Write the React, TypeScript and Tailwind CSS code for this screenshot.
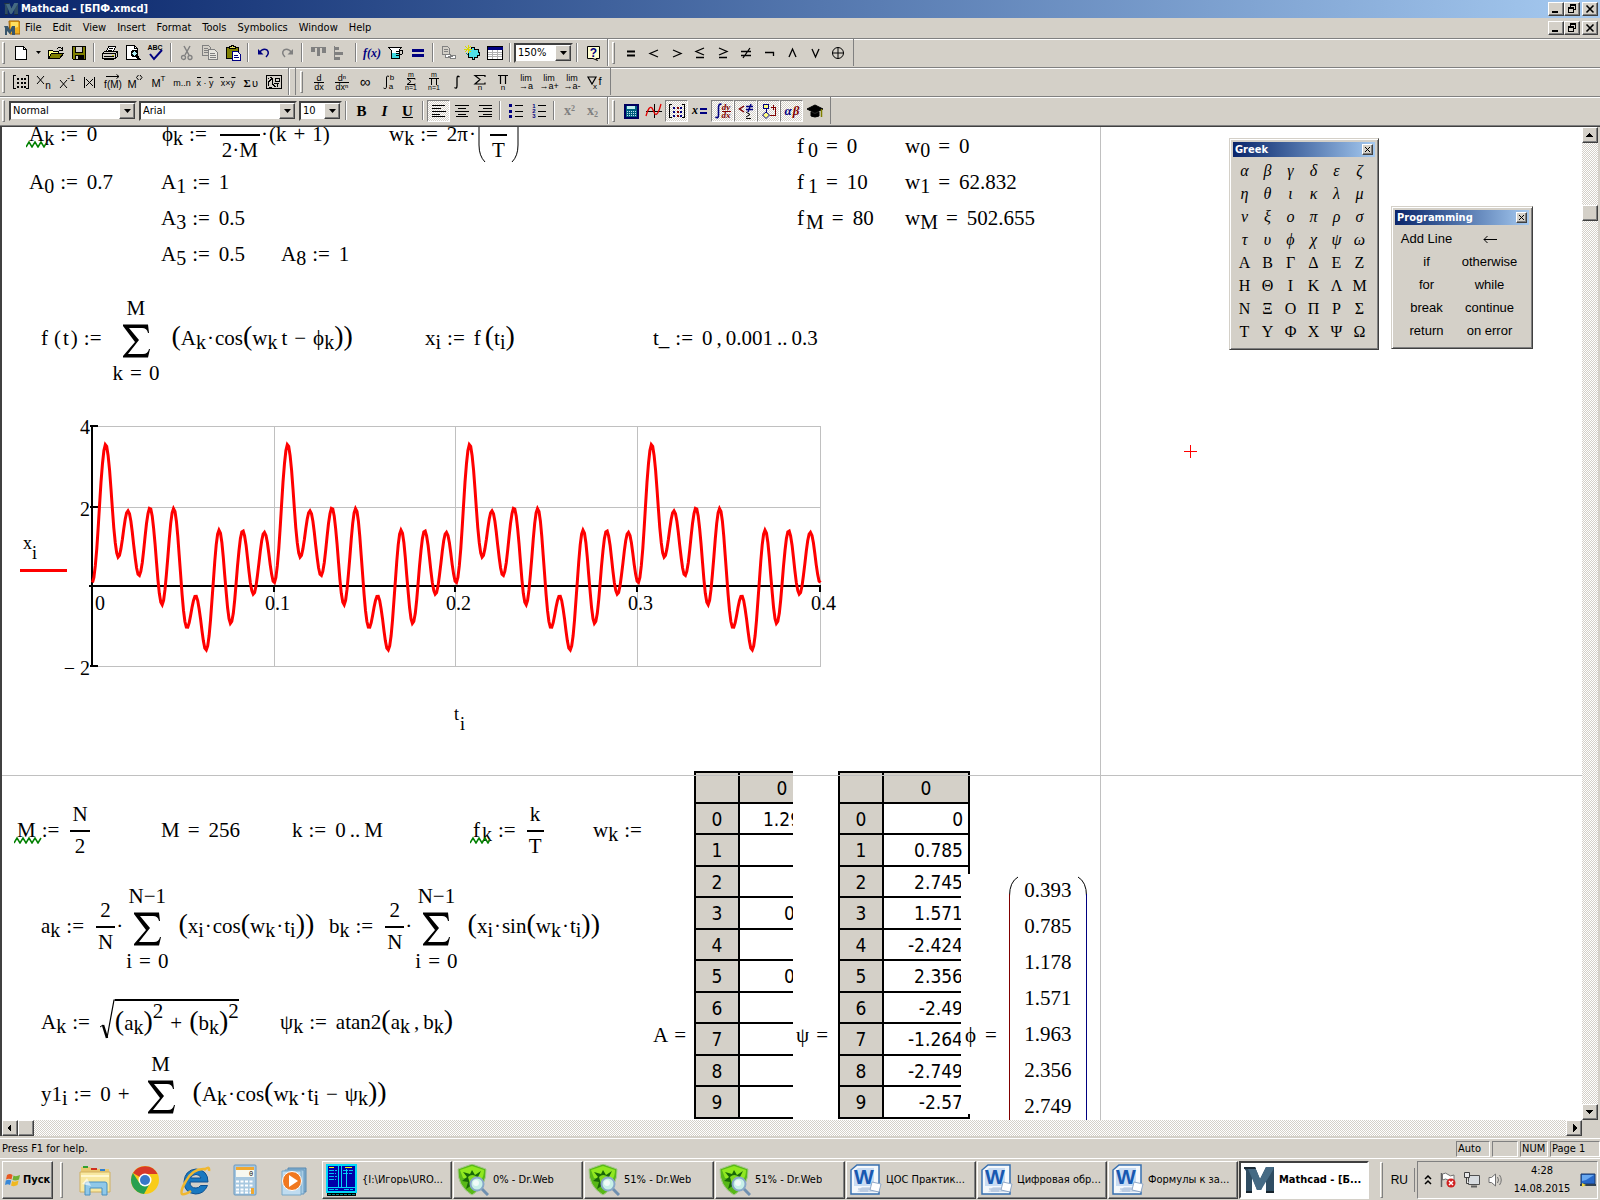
import React from "react";

type Kids = { children?: React.ReactNode };

const RAISED =
  "border border-t-white border-l-white border-r-[#404040] border-b-[#404040] shadow-[inset_-1px_-1px_0_#808080] bg-[#d4d0c8]";
const DITHER = "bg-[repeating-conic-gradient(#ffffff_0_25%,#d4d0c8_0_50%)] bg-[length:2px_2px]";

/* ---------- small drawing helpers ---------- */

function Ic({ children, soft }: Kids & { soft?: boolean }) {
  return (
    <svg
      viewBox="0 0 16 16"
      className="size-4 shrink-0 overflow-visible"
      fill="none"
      stroke="#000"
      strokeWidth="1"
      shapeRendering={soft ? "auto" : "crispEdges"}
      aria-hidden="true"
    >
      {children}
    </svg>
  );
}

function T({
  x,
  y,
  s,
  children,
  fill = "#000",
  serif,
  italic,
  bold,
}: Kids & { x: number; y: number; s: number; fill?: string; serif?: boolean; italic?: boolean; bold?: boolean }) {
  return (
    <text
      x={x}
      y={y}
      fontSize={s}
      fill={fill}
      stroke="none"
      textAnchor="middle"
      fontStyle={italic ? "italic" : "normal"}
      fontWeight={bold ? 700 : 400}
      fontFamily={serif ? "Liberation Serif, serif" : "Liberation Sans, sans-serif"}
    >
      {children}
    </text>
  );
}

function MLogo({ className }: { className: string }) {
  return (
    <svg viewBox="0 0 32 30" className={className} aria-hidden="true">
      <path d="M1 2H12L17 14L23 2H31V4H31V28H23V13L18 25H14L9 12V28H3V6L1 3Z" fill="#2f4d63" />
      <path d="M12 2L17 14L23 2H31L30 5L18 25H14L5 4H11Z" fill="#456a84" />
      <path d="M1 2H12L13 4H1Z" fill="#1c2c38" />
      <path d="M3 26H9V28H3ZM23 26H31V28H23Z" fill="#16232d" />
    </svg>
  );
}

/* ---------- toolbar icons ---------- */

const K = "#000";
const G = "#808080";
const N = "#000080";
const O = "#808000";

const icons: Record<string, React.ReactNode> = {
  new: (
    <Ic>
      <path d="M2.5 1.5H10.5L13.5 4.5V14.5H2.5Z" fill="#fff" />
      <path d="M10.5 1.5V4.5H13.5" />
    </Ic>
  ),
  open: (
    <Ic>
      <path d="M.5 13.5V5.5H4.5L5.5 6.5H10.5V8.5" fill="#ffff80" />
      <path d="M.5 13.5L3.5 8.5H15.5L11.5 13.5Z" fill={O} />
      <path d="M9 3.5L10.5 2.5H12.5L14.5 4.5M14.5 2V5.5H11" />
    </Ic>
  ),
  save: (
    <Ic>
      <path d="M1.5 1.5H14.5V14.5H2.5L1.5 13.5Z" fill={O} />
      <path d="M4.5 1.5H11.5V7.5H4.5Z" fill="#d4d0c8" />
      <path d="M4 10H12V14H4Z" fill={K} />
      <path d="M5 11H7V14H5Z" fill="#d4d0c8" stroke="none" />
    </Ic>
  ),
  print: (
    <Ic>
      <path d="M4.5 6.5L6.5 1.5H13.5L11.5 6.5" fill="#fff" />
      <path d="M7 3.5H11M6 5.5H10" />
      <path d="M.5 8.5L2.5 6.5H15.5V11.5L13.5 13.5H.5Z" fill="#d4d0c8" />
      <path d="M.5 8.5H13.5V13M13.5 8.5L15.5 6.5M2 11.5H12M2.5 13.5V14.5H11.5L13 13" />
      <path d="M10 10.5H12" stroke="#c0c000" />
    </Ic>
  ),
  preview: (
    <Ic>
      <path d="M1.5 .5H9.5L12.5 3.5V14.5H1.5Z" fill="#fff" />
      <path d="M9.5 .5V3.5H12.5" />
      <circle cx="9.5" cy="8.5" r="3" fill="#b0f0f8" strokeWidth="1.5" />
      <path d="M11.5 11L15 15" strokeWidth="2.5" />
    </Ic>
  ),
  spell: (
    <Ic soft>
      <T x={7} y={5} s={7} bold>
        ABC
      </T>
      <path d="M2 9L6 14L14 5" stroke={N} strokeWidth="2" />
    </Ic>
  ),
  cut: (
    <Ic soft>
      <path d="M5 1L10 10M11 1L6 10" stroke={G} strokeWidth="1.5" />
      <circle cx="4.5" cy="12.5" r="2" stroke={G} strokeWidth="1.3" />
      <circle cx="11" cy="12.5" r="2" stroke={G} strokeWidth="1.3" />
    </Ic>
  ),
  copy: (
    <Ic>
      <path d="M.5 .5H6.5L8.5 2.5V10.5H.5ZM2 3.5H6M2 5.5H7M2 7.5H7" stroke={G} />
      <path d="M6.5 4.5H12.5L15.5 7.5V14.5H6.5Z" stroke={G} fill="#e8e6e0" />
      <path d="M8 8.5H13M8 10.5H14M8 12.5H14" stroke={G} />
    </Ic>
  ),
  paste: (
    <Ic>
      <path d="M1.5 2.5H13.5V13.5H1.5Z" fill={O} />
      <path d="M4.5 3.5V1.5H6.5V.5H8.5V1.5H10.5V3.5Z" fill="#e0e060" />
      <path d="M7.5 6.5H12.5L15.5 9.5V15.5H7.5Z" fill="#fff" stroke={N} />
      <path d="M9 10.5H13M9 12.5H14" stroke={N} />
    </Ic>
  ),
  undo: (
    <Ic soft>
      <path d="M3 8Q7 2.500 11 5Q14 8 10 12" stroke={N} strokeWidth="1.5" />
      <path d="M2 4V9.500H7.500Z" fill={N} stroke="none" />
    </Ic>
  ),
  redo: (
    <Ic soft>
      <path d="M13 8Q9 2.500 5 5Q2 8 6 12" stroke={G} strokeWidth="1.5" />
      <path d="M14 4V9.500H8.500Z" fill={G} stroke="none" />
    </Ic>
  ),
  alignTop: (
    <Ic>
      <path d="M1 2H16V3H1ZM1 3H5V7H1ZM7 3H10V11H7ZM12 3H16V8H12Z" fill={G} stroke="none" />
    </Ic>
  ),
  alignMid: (
    <Ic>
      <path d="M1 1H2V15H1ZM2 2H6V5H2ZM2 7H10V10H2ZM2 12H7V15H2Z" fill={G} stroke="none" />
    </Ic>
  ),
  fx: (
    <Ic soft>
      <T x={8} y={12} s={12} fill={N} serif italic bold>
        f(x)
      </T>
    </Ic>
  ),
  cup: (
    <Ic>
      <path d="M1.500 2.500H14.500L12.500 4.500V13.500H4.500V5.500Z" fill="#fff" />
      <path d="M5 8H12V13H5Z" fill="#40d8e0" stroke="none" />
      <path d="M12.500 5.500H15.500V8.500L12.500 10.500M9 6.500H12M9 8.500H12M9 10.500H12" />
    </Ic>
  ),
  eqBig: (
    <Ic>
      <path d="M2 4H14V7H2ZM2 9H14V12H2Z" fill={N} stroke="none" />
    </Ic>
  ),
  link: (
    <Ic>
      <path d="M1.500 1.500H6.500L8.500 3.500V9.500H1.500ZM3 4.500H7M3 6.500H7" stroke={G} />
      <path d="M4.500 9.500H9.500V12.500H4.500ZM9.500 10.500H14.500V13.500H9.500ZM7 11.500H12" stroke={G} fill="#fff" />
    </Ic>
  ),
  puzzle: (
    <Ic>
      <path d="M4.500 4.500H7.500V2.500H10.500V4.500H14.500V7.500H15.500V10.500H13.500V12.500H10.500V14.500H8.500V12.500H4.500Z" fill="#50e0e8" />
      <path d="M1 1L7 7M7 1L1 7M4 0V8M0 4H8" stroke="#d8d800" />
      <path d="M2.500 8.500L4.500 10.500" stroke="#008080" />
    </Ic>
  ),
  table: (
    <Ic>
      <path d="M.5 1.500H15.500V14.500H.5Z" fill="#fff" />
      <path d="M1 2H15V4H1Z" fill={N} stroke={N} />
      <path d="M1 7.500H15M1 9.500H15M1 11.500H15M5.500 5V14M10.500 5V14" stroke="#b0b0b0" />
    </Ic>
  ),
  help: (
    <Ic soft>
      <path d="M2.500 1.500H14.500V13.500H11L12.500 15.500L8 13.500H2.500Z" fill="#ffffd0" />
      <T x={8.5} y={12} s={12} fill={N} bold>
        ?
      </T>
    </Ic>
  ),
  left: (
    <Ic>
      <path d="M1 2.500H14M1 5.500H10M1 8.500H15M1 11.500H9M1 13.500H14" />
    </Ic>
  ),
  center: (
    <Ic>
      <path d="M1 2.500H15M4 5.500H12M1 8.500H15M4 11.500H12M2 13.500H14" />
    </Ic>
  ),
  right: (
    <Ic>
      <path d="M2 2.500H15M6 5.500H15M1 8.500H15M6 11.500H15M2 13.500H15" />
    </Ic>
  ),
  bullets: (
    <Ic>
      <path d="M1 1H4V4H1ZM1 7H4V10H1ZM1 12H4V15H1Z" fill={N} stroke="none" />
      <path d="M7 2.500H15M7 8.500H15M7 13.500H15" />
    </Ic>
  ),
  numbers: (
    <Ic>
      <T x={3} y={5} s={6} fill={N} bold>
        1
      </T>
      <T x={3} y={10} s={6} fill={N} bold>
        2
      </T>
      <T x={3} y={15} s={6} fill={N} bold>
        3
      </T>
      <path d="M7 2.500H15M7 8.500H15M7 13.500H15" />
    </Ic>
  ),
  calc: (
    <Ic>
      <path d="M1.500 1.500H14.500V14.500H1.500Z" fill="#006080" stroke="#000060" strokeWidth="2" />
      <path d="M4 3H12V6H4Z" fill="#c0f0f0" stroke="none" />
      <path d="M4 8.500H13M4 10.500H13M4 12.500H13" stroke="#c0e0f0" strokeDasharray="1 1" />
    </Ic>
  ),
  graph: (
    <Ic soft>
      <path d="M0 8.500H16M8.500 1V15" />
      <path d="M0 13Q3 2 6 5Q8 9 9 11Q12 13 15 1" stroke="#e00000" strokeWidth="1.3" />
    </Ic>
  ),
  matrix: (
    <Ic>
      <path d="M3 1.500H.5V14.500H3M13 1.500H15.500V14.500H13" />
      <path d="M4 4H6V6H4ZM4 8H6V10H4ZM4 12H6V14H4ZM11 4H13V6H11ZM11 8H13V10H11ZM11 12H13V14H11Z" fill={N} stroke="none" />
      <path d="M7.500 4H9.500V6H7.500ZM7.500 8H9.500V10H7.500ZM7.500 12H9.500V14H7.500Z" fill="#800000" stroke="none" />
    </Ic>
  ),
  xeq: (
    <Ic soft>
      <T x={3} y={11} s={12} serif italic bold>
        x
      </T>
      <path d="M8 6H15M8 10H15" stroke={N} strokeWidth="2" />
    </Ic>
  ),
  calculus: (
    <Ic soft>
      <path d="M6.500 1.500Q4 0 3.500 4V12Q3.500 16 .5 14" stroke={N} strokeWidth="1.600" />
      <T x={11} y={7} s={9} fill="#800000" serif italic bold>
        dy
      </T>
      <path d="M7 8.500H16" stroke="#800000" />
      <T x={11} y={15} s={9} fill="#800000" serif italic bold>
        dx
      </T>
    </Ic>
  ),
  bool: (
    <Ic soft>
      <path d="M6 3L1.500 6L6 9" stroke="#800000" strokeWidth="1.500" />
      <path d="M8 3.500H15M8 6.500H15M13 1L10 9" stroke={N} strokeWidth="1.500" />
      <path d="M8 9L12 11.500L8 14M8 15.500H13" />
    </Ic>
  ),
  prog: (
    <Ic>
      <path d="M2.500 1.500H7.500V5.500H2.500Z" fill="#ffff80" stroke={N} />
      <path d="M5 6V10" stroke={N} />
      <path d="M5 9L8.500 12L5 15.500L1.500 12Z" fill="#ffff80" stroke={N} shapeRendering="auto" />
      <path d="M9 12.500H14.500V4.500H10M12 2V7" stroke="#800000" />
    </Ic>
  ),
  greek: (
    <Ic soft>
      <T x={4} y={12} s={13} fill={N} serif italic bold>
        α
      </T>
      <T x={12} y={12} s={13} fill="#800000" serif italic bold>
        β
      </T>
    </Ic>
  ),
  cap: (
    <Ic soft>
      <path d="M0 6L8 2L16 6L8 10Z" fill={K} />
      <path d="M4 9V13Q8 15 12 13V9L8 11Z" fill={K} />
      <path d="M14.500 6V14" stroke={O} strokeWidth="1.500" />
    </Ic>
  ),
  mat: (
    <Ic>
      <path d="M3 1.500H.5V14.500H3M13 1.500H15.500V14.500H13" />
      <path
        d="M4 4H6V6H4ZM4 8H6V10H4ZM4 12H6V14H4ZM11 4H13V6H11ZM11 8H13V10H11ZM11 12H13V14H11ZM7.500 4H9.500V6H7.500ZM7.500 8H9.500V10H7.500ZM7.500 12H9.500V14H7.500Z"
        fill={K}
        stroke="none"
      />
    </Ic>
  ),
  xn: (
    <Ic soft>
      <path d="M1 2L8 10M8 2L1 10" />
      <T x={12} y={15} s={10}>
        n
      </T>
    </Ic>
  ),
  xinv: (
    <Ic soft>
      <path d="M1 6L8 14M8 6L1 14" />
      <T x={12} y={7} s={9}>
        -1
      </T>
    </Ic>
  ),
  absx: (
    <Ic soft>
      <path d="M4 5L11 12M11 5L4 12M2.500 3V14M12.500 3V14" />
    </Ic>
  ),
  fM: (
    <Ic soft>
      <path d="M1 2.500H14M11.500 .5L14 2.500L11.500 4.500" />
      <T x={8} y={14} s={10}>
        f(M)
      </T>
    </Ic>
  ),
  Mcol: (
    <Ic soft>
      <T x={4} y={14} s={11}>
        M
      </T>
      <path d="M10.500 1L8.500 3.500L10.500 6M12 1L14 3.500L12 6" />
    </Ic>
  ),
  Mt: (
    <Ic soft>
      <T x={5} y={13} s={11}>
        M
      </T>
      <T x={12} y={7} s={8}>
        T
      </T>
    </Ic>
  ),
  mn: (
    <Ic soft>
      <T x={8} y={12} s={9}>
        m..n
      </T>
    </Ic>
  ),
  dotp: (
    <Ic soft>
      <path d="M0 3.500H4M11.500 3.500H15.500" />
      <T x={8} y={12} s={9}>
        x · y
      </T>
    </Ic>
  ),
  crossp: (
    <Ic soft>
      <path d="M0 3.500H4M11.500 3.500H15.500" />
      <T x={8} y={12} s={9}>
        x×y
      </T>
    </Ic>
  ),
  sumv: (
    <Ic soft>
      <T x={4} y={13} s={11} bold serif>
        Σ
      </T>
      <T x={12} y={13} s={11}>
        υ
      </T>
    </Ic>
  ),
  pic: (
    <Ic>
      <path d="M.5 1.500H15.500V14.500H.5Z" />
      <path d="M2.500 12V8L6.500 4.500V10L9.500 13M6.500 4.500L4.500 3.500M9.500 4.500H13.500V7.500H9.500ZM8 9.500H13M11.500 9V13M3 13.500H6M2 4.500H3" strokeWidth="1.500" />
    </Ic>
  ),
  ddx: (
    <Ic soft>
      <T x={8} y={7} s={9}>
        d
      </T>
      <path d="M3 8.500H13" />
      <T x={8} y={16} s={9}>
        dx
      </T>
    </Ic>
  ),
  dndx: (
    <Ic soft>
      <T x={8} y={7} s={9}>
        dⁿ
      </T>
      <path d="M1 8.500H15" />
      <T x={8} y={16} s={9}>
        dxⁿ
      </T>
    </Ic>
  ),
  inf: (
    <Ic soft>
      <T x={8} y={13} s={15}>
        ∞
      </T>
    </Ic>
  ),
  intab: (
    <Ic soft>
      <path d="M9 2.500Q6.500 1 6.500 4V12Q6.500 16 3.500 14" />
      <T x={12} y={6} s={8}>
        b
      </T>
      <T x={11} y={15} s={8}>
        a
      </T>
    </Ic>
  ),
  sumn: (
    <Ic soft>
      <T x={8} y={3} s={7}>
        m
      </T>
      <path d="M12 5.500V4.500H4L8 7.500L4 10.500H12V9.500" />
      <T x={8} y={16} s={7}>
        n=1
      </T>
    </Ic>
  ),
  prodn: (
    <Ic soft>
      <T x={8} y={3} s={7}>
        m
      </T>
      <path d="M3 4.500H13M5.500 4.500V11M10.500 4.500V11" />
      <T x={8} y={16} s={7}>
        n=1
      </T>
    </Ic>
  ),
  int: (
    <Ic soft>
      <path d="M10.500 3Q8 1 8 4.500V11.500Q8 15.500 5.500 13.500" strokeWidth="1.300" />
    </Ic>
  ),
  sum: (
    <Ic soft>
      <path d="M13 3V1.500H3L8 5.500L3 10H13V8.500" strokeWidth="1.200" />
      <T x={8} y={16} s={8}>
        n
      </T>
    </Ic>
  ),
  prod: (
    <Ic soft>
      <path d="M3 1.500H13M5.500 1.500V10M10.500 1.500V10" strokeWidth="1.200" />
      <T x={8} y={16} s={8}>
        n
      </T>
    </Ic>
  ),
  nabla: (
    <Ic soft>
      <path d="M1 3H9L5 10Z" strokeWidth="1.200" />
      <T x={8} y={15} s={8}>
        x
      </T>
      <T x={13} y={11} s={11}>
        f
      </T>
    </Ic>
  ),
  plusC: (
    <Ic soft>
      <circle cx="8" cy="8" r="5.500" />
      <path d="M2 8H14M8 2V14" />
    </Ic>
  ),
};
["lim", "lim+", "lim-"].forEach((k) => {
  icons[k] = (
    <Ic soft>
      <T x={8} y={7} s={9}>
        lim
      </T>
      <T x={8} y={15} s={9}>
        {"→a" + k.slice(3)}
      </T>
    </Ic>
  );
});
const relations: [string, string][] = [
  ["req", "M4 6.500H12M4 10.500H12"],
  ["rlt", "M12 5L4 8.500L12 12"],
  ["rgt", "M4 5L12 8.500L4 12"],
  ["rle", "M12 3L4 6.500L12 10M4 12.500H12"],
  ["rge", "M4 3L12 6.500L4 10M4 12.500H12"],
  ["rne", "M3 6.500H13M3 10.500H13M12 3L5 13"],
  ["rnot", "M4 7.500H12.500V11"],
  ["rand", "M5 12L8.500 4L12 12"],
  ["ror", "M5 4L8.500 12L12 4"],
];
relations.forEach(([k, d]) => {
  icons[k] = (
    <Ic soft>
      <path d={d} strokeWidth={k === "req" ? 2 : 1.3} />
    </Ic>
  );
});

function Tool({ id, on }: { id: string; on?: boolean }) {
  return (
    <button
      type="button"
      aria-label={id}
      className={
        on
          ? "flex h-[22px] w-[23px] items-center justify-center border border-t-[#808080] border-l-[#808080] border-r-white border-b-white " +
            DITHER
          : "flex h-[22px] w-[23px] items-center justify-center"
      }
    >
      {icons[id]}
    </button>
  );
}

const Tools = ({ ids, on = [] }: { ids: string[]; on?: string[] }) => (
  <>
    {ids.map((i) => (
      <Tool key={i} id={i} on={on.includes(i)} />
    ))}
  </>
);

const Sep = () => <span className="mx-[3px] h-[19px] w-0.5 border-l border-[#808080] border-r border-r-white" />;
const Grip = () => <span className="mr-1 ml-0.5 h-[22px] w-[3px] border border-t-white border-l-white border-r-[#808080] border-b-[#808080]" />;

function Bar({ children, last }: Kids & { last?: boolean }) {
  return (
    <div
      className={
        last
          ? "flex h-[27px] items-center border-r border-[#808080] pr-1"
          : "flex h-[27px] items-center border-r border-[#808080] pr-[3px] shadow-[1px_0_0_#ffffff]"
      }
    >
      {children}
    </div>
  );
}

const Row = ({ children }: Kids) => (
  <div className="flex h-[29px] items-center gap-0.5 border-t border-t-white border-b border-b-[#808080] pb-0.5">{children}</div>
);

function Combo({ label, value, w }: { label: string; value: string; w: string }) {
  return (
    <div
      className={
        "flex h-5 items-stretch border-2 border-t-[#404040] border-l-[#404040] border-r-[#d4d0c8] border-b-[#d4d0c8] bg-white " + w
      }
    >
      <select aria-label={label} className="min-w-0 flex-1 appearance-none bg-white pl-0.5 leading-4 outline-none">
        <option>{value}</option>
      </select>
      <span className={"flex w-4 items-center justify-center " + RAISED}>
        <svg viewBox="0 0 7 4" className="h-1 w-[7px]" aria-hidden="true">
          <path d="M0 0H7L3.500 4Z" />
        </svg>
      </span>
    </div>
  );
}

function WinButtons() {
  const b = "flex h-3.5 w-4 items-center justify-center " + RAISED;
  return (
    <div className="flex">
      <button type="button" aria-label="Minimize" className={b}>
        <svg viewBox="0 0 10 10" className="size-2.5" shapeRendering="crispEdges">
          <path d="M1 7H7V9H1Z" />
        </svg>
      </button>
      <button type="button" aria-label="Restore" className={b}>
        <svg viewBox="0 0 10 10" className="size-2.5" fill="none" stroke="#000" shapeRendering="crispEdges">
          <path d="M3.500 4V.5H8.500V5.500H7M3 1.500H9M1.500 3.500H6.500V8.500H1.500ZM1 4.500H7" />
        </svg>
      </button>
      <button type="button" aria-label="Close" className={"ml-0.5 " + b}>
        <svg viewBox="0 0 10 10" className="size-2.5" fill="none" stroke="#000" strokeWidth="1.600">
          <path d="M1.500 1.500L8.500 8.500M8.500 1.500L1.500 8.500" />
        </svg>
      </button>
    </div>
  );
}

/* ---------- math typesetting ---------- */

const Region = ({ at, children }: Kids & { at: string }) => (
  <div className={"absolute flex h-6 items-center leading-6 whitespace-pre " + at}>{children}</div>
);
const Sub = ({ children }: Kids) => <span className="mt-2 text-[20px]">{children}</span>;
const Def = () => <span className="mr-[9px] ml-1.5">:=</span>;
const Eq = () => <span className="mr-[9px] ml-2">=</span>;
const Op = ({ children }: Kids) => <span className="mx-[7px]">{children}</span>;
const Dot = () => <span className="mx-px">·</span>;
const Par = ({ children }: Kids) => <span className="mb-1 text-[28px]">{children}</span>;
const Squiggle = ({ w }: { w: string }) => (
  <svg className={"absolute top-[18px] -left-[3px] h-2 " + w} viewBox="0 0 28 8" preserveAspectRatio="xMinYMid slice" aria-hidden="true">
    <path d="M0 7L3 2L6 7L9 2L12 7L15 2L18 7L21 2L24 7L27 2" fill="none" stroke="#008000" strokeWidth="1.500" />
  </svg>
);
function Frac({ n, d }: { n: React.ReactNode; d: React.ReactNode }) {
  return (
    <span className="ml-0.5 flex flex-col items-stretch text-center">
      <span className="h-6 px-0.5">{n}</span>
      <span className="mt-1 mb-0.5 h-0.5 bg-black" />
      <span className="px-0.5">{d}</span>
    </span>
  );
}
function Sum({ hi, lo }: { hi: string; lo?: [string, string] }) {
  return (
    <span className="mx-0.5 mt-1 flex flex-col items-center">
      <span>{hi}</span>
      <svg viewBox="0 0 28 34" className="mt-1 mb-[3px] h-[34px] w-7" aria-hidden="true">
        <path d="M1 .5H26L27 9H26Q25 4 20 4H7L17 16L6 30H21Q26 30 27 25H28L26 33.500H1V32L13 18L1 2Z" />
      </svg>
      <span className="h-6">
        {lo && (
          <>
            {lo[0]}
            <Op>=</Op>
            {lo[1]}
          </>
        )}
      </span>
    </span>
  );
}
const BigParen = ({ d }: { d: string }) => (
  <svg viewBox="0 0 9 58" className="h-[58px] w-[9px]" fill="none" stroke="#000" aria-hidden="true">
    <path d={d} />
  </svg>
);

/* ---------- plot ---------- */

const harmonics: [number, number][] = [
  [0, 0.7],
  [1, 1],
  [3, 0.5],
  [5, 0.5],
  [8, 1],
];
const signal = (t: number) =>
  harmonics.reduce((s, [k, a]) => s + a * Math.cos(2 * Math.PI * 10 * k * t - ((k + 1) * Math.PI) / 8), 0);
const curve = Array.from({ length: 513 }, (_, i) => {
  const t = (i * 0.4) / 512;
  return `${(92.5 + (t / 0.4) * 728).toFixed(1)},${(175.5 - signal(t) * 39.5).toFixed(1)}`;
}).join(" ");

function Plot() {
  return (
    <svg
      className="absolute top-[293px] left-0 h-[330px] w-[850px] text-[20px]"
      viewBox="2 10 850 330"
      fontFamily="Liberation Serif, serif"
      role="img"
      aria-label="Plot of x against t"
    >
      <g stroke="#c0c0c0" shapeRendering="crispEdges" fill="none">
        <path d="M92 16.500H820.500M92 97.500H820.500M92 256.500H820.500M274.500 16V257M455.500 16V257M637.500 16V257M820.500 16V257" />
      </g>
      <g stroke="#000" strokeWidth="2" shapeRendering="crispEdges" fill="none">
        <path d="M92 15V257M89 176H821M90 16H98M90 97H98M90 256H98M274 176V182M455 176V182M637 176V182M820 176V182" />
      </g>
      <polyline points={curve} fill="none" stroke="#ff0000" strokeWidth="3" />
      <path d="M20 160.500H67" stroke="#ff0000" strokeWidth="3" />
      <g textAnchor="end">
        <text x="90" y="24">4</text>
        <text x="90" y="106">2</text>
        <text x="90" y="265">− 2</text>
      </g>
      <g>
        <text x="95" y="200">0</text>
        <text x="265" y="200">0.1</text>
        <text x="446" y="200">0.2</text>
        <text x="628" y="200">0.3</text>
        <text x="811" y="200">0.4</text>
      </g>
      <g fontSize="18">
        <text x="23" y="139">x</text>
        <text x="32" y="149">i</text>
        <text x="454" y="310">t</text>
        <text x="460" y="320">i</text>
      </g>
    </svg>
  );
}

function ResultTable({ name, values, align }: { name: string; values: React.ReactNode[]; align: string }) {
  const th = "border-2 border-black bg-[#d4d0c8] p-0 text-center font-normal";
  return (
    <table
      aria-label={name}
      className="w-[132px] table-fixed border-collapse font-['DejaVu_Sans_Condensed','DejaVu_Sans',sans-serif] text-[19px] leading-6"
    >
      <thead>
        <tr className="h-[31px]">
          <th className={"w-11 " + th} />
          <th className={th}>0</th>
        </tr>
      </thead>
      <tbody>
        {values.map((v, i) => (
          <tr key={i} className="odd:h-[31px] even:h-8">
            <th className={th}>{i}</th>
            <td className={"border-2 border-black bg-white p-0 " + align}>{v}</td>
          </tr>
        ))}
      </tbody>
    </table>
  );
}

function Worksheet() {
  return (
    <div className="relative min-w-0 flex-1 overflow-hidden bg-white font-['Liberation_Serif',serif] text-[21px] text-black">
      <Region at="top-[-5px] left-[27px]">
        <Squiggle w="w-5" />A<Sub>k</Sub>
        <Def />0
      </Region>
      <Region at="top-[-5px] left-[160px]">
        ϕ<Sub>k</Sub>
        <Def />
        <span className="w-0.5" />
        <Frac n="" d="2·M" />
        <Dot />
        (k<Op>+</Op>1)
      </Region>
      <Region at="top-[-5px] left-[387px]">
        w<Sub>k</Sub>
        <Def />
        2π
        <Dot />
        <BigParen d="M8 1Q2 7 2 18V40Q2 51 8 57" />
        <span className="mr-1 ml-0.5">
          <Frac n="" d="T" />
        </span>
        <BigParen d="M1 1Q7 7 7 18V40Q7 51 1 57" />
      </Region>

      <Region at="top-[43px] left-[27px]">A<Sub>0</Sub><Def />0.7</Region>
      <Region at="top-[43px] left-[159px]">A<Sub>1</Sub><Def />1</Region>
      <Region at="top-[79px] left-[159px]">A<Sub>3</Sub><Def />0.5</Region>
      <Region at="top-[115px] left-[159px]">A<Sub>5</Sub><Def />0.5</Region>
      <Region at="top-[115px] left-[279px]">A<Sub>8</Sub><Def />1</Region>

      <Region at="top-[7px] left-[795px]">f<span className="w-1" /><Sub>0</Sub><Eq />0</Region>
      <Region at="top-[43px] left-[795px]">f<span className="w-1" /><Sub>1</Sub><Eq />10</Region>
      <Region at="top-[79px] left-[795px]">f<span className="w-0.5" /><Sub>M</Sub><Eq />80</Region>
      <Region at="top-[7px] left-[903px]">w<Sub>0</Sub><Eq />0</Region>
      <Region at="top-[43px] left-[903px]">w<Sub>1</Sub><Eq />62.832</Region>
      <Region at="top-[79px] left-[903px]">w<Sub>M</Sub><Eq />502.655</Region>

      <Region at="top-[199px] left-[39px]">
        f<span className="w-1.5" />(<span className="mx-0.5">t</span>)
        <Def />
        <Sum hi="M" lo={["k", "0"]} />
        <span className="w-2.5" />
        <Par>(</Par>A<Sub>k</Sub>
        <Dot />
        cos<Par>(</Par>w<Sub>k</Sub>
        <span className="ml-1">t</span>
        <Op>−</Op>ϕ<Sub>k</Sub>
        <Par>))</Par>
      </Region>
      <Region at="top-[199px] left-[423px]">
        x<Sub>i</Sub>
        <Def />f<span className="w-1" /><Par>(</Par>t<Sub>i</Sub>
        <Par>)</Par>
      </Region>
      <Region at="top-[199px] left-[651px]">
        t_
        <Def />0<span className="mx-1">,</span>0.001<span className="mx-1">..</span>0.3
      </Region>

      <Plot />

      <Region at="top-[691px] left-[15px]">
        <Squiggle w="w-7" />M<Def />
        <Frac n="N" d="2" />
      </Region>
      <Region at="top-[691px] left-[159px]">M<Eq />256</Region>
      <Region at="top-[691px] left-[290px]">k<Def />0<span className="mx-1">..</span>M</Region>
      <Region at="top-[691px] left-[471px]">
        <Squiggle w="w-5" />f<span className="w-0.5" /><Sub>k</Sub>
        <Def />
        <Frac n="k" d="T" />
      </Region>
      <Region at="top-[691px] left-[591px]">w<Sub>k</Sub><Def /></Region>

      <Region at="top-[787px] left-[39px]">
        a<Sub>k</Sub>
        <Def />
        <span className="w-px" />
        <Frac n="2" d="N" />
        <Dot />
        <Sum hi="N−1" lo={["i", "0"]} />
        <span className="w-2" />
        <Par>(</Par>x<Sub>i</Sub>
        <Dot />
        cos<Par>(</Par>w<Sub>k</Sub>
        <Dot />t<Sub>i</Sub>
        <Par>))</Par>
      </Region>
      <Region at="top-[787px] left-[327px]">
        b<Sub>k</Sub>
        <Def />
        <span className="w-px" />
        <Frac n="2" d="N" />
        <Dot />
        <Sum hi="N−1" lo={["i", "0"]} />
        <span className="w-2" />
        <Par>(</Par>x<Sub>i</Sub>
        <Dot />
        sin<Par>(</Par>w<Sub>k</Sub>
        <Dot />t<Sub>i</Sub>
        <Par>))</Par>
      </Region>

      <Region at="top-[883px] left-[39px]">
        A<Sub>k</Sub>
        <Def />
        <svg viewBox="0 0 16 40" className="mb-1.5 h-10 w-4" fill="none" stroke="#000" aria-hidden="true">
          <path d="M1 28L4 26" />
          <path d="M4 26L8 39" strokeWidth="2.500" />
          <path d="M8 39L15 1H16" strokeWidth="1.200" />
        </svg>
        <span className="mb-[18px] flex h-7 items-center border-t-2 border-black pt-[18px]">
          <Par>(</Par>a<Sub>k</Sub>
          <Par>)</Par>
          <span className="mb-6">2</span>
          <Op>+</Op>
          <Par>(</Par>b<Sub>k</Sub>
          <Par>)</Par>
          <span className="mb-6">2</span>
        </span>
      </Region>
      <Region at="top-[883px] left-[278px]">
        ψ<Sub>k</Sub>
        <Def />
        atan2<Par>(</Par>a<Sub>k</Sub>
        <span className="mx-1">,</span>b<Sub>k</Sub>
        <Par>)</Par>
      </Region>
      <Region at="top-[955px] left-[39px]">
        y1<Sub>i</Sub>
        <Def />0<Op>+</Op>
        <span className="w-2" />
        <Sum hi="M" />
        <span className="w-4" />
        <Par>(</Par>A<Sub>k</Sub>
        <Dot />
        cos<Par>(</Par>w<Sub>k</Sub>
        <Dot />t<Sub>i</Sub>
        <Op>−</Op>ψ<Sub>k</Sub>
        <Par>))</Par>
      </Region>

      <Region at="top-[896px] left-[651px]">A<span className="ml-1.5">=</span></Region>
      <div className="absolute top-[644px] left-[692px] w-[99px] overflow-hidden">
        <ResultTable
          name="A"
          align="text-left pl-11"
          values={[<span className="-ml-[21px]">1.29</span>, "", "", "0", "", "0", "", "", "", ""]}
        />
      </div>
      <Region at="top-[896px] left-[794px]">ψ<span className="ml-[7px]">=</span></Region>
      <div className="absolute top-[644px] left-[836px]">
        <ResultTable
          name="psi"
          align="text-right pr-[5px]"
          values={["0", "0.785", "2.745", "1.571", "-2.424", "2.356", "-2.49", "-1.264", "-2.749", "-2.57"]}
        />
      </div>
      <div className="absolute top-[747px] left-[959px] flex h-60 w-[127px] items-start bg-white">
        <span className="mt-[149px] ml-1 leading-6">
          ϕ<span className="mx-[9px]">=</span>
        </span>
        <svg viewBox="0 0 10 260" className="mt-0.5 ml-0.5 h-[260px] w-2.5 shrink-0" fill="none" stroke="#000" aria-hidden="true">
          <path d="M10 1Q1.500 6 1.500 20" />
          <path d="M1.500 18V260" stroke="#800000" />
        </svg>
        <div className="mt-1 flex flex-1 flex-col items-center gap-3 leading-6">
          {["0.393", "0.785", "1.178", "1.571", "1.963", "2.356", "2.749"].map((v) => (
            <span key={v}>{v}</span>
          ))}
        </div>
        <svg viewBox="0 0 10 260" className="mt-0.5 h-[260px] w-2.5 shrink-0" fill="none" stroke="#000" aria-hidden="true">
          <path d="M0 1Q8.500 6 8.500 20" />
          <path d="M8.500 18V260" stroke="#000080" />
        </svg>
      </div>

      <span className="absolute top-[648px] right-0 left-0 h-px bg-[#c0c0c0]" />
      <span className="absolute top-0 bottom-0 left-[1098px] w-px bg-[#c0c0c0]" />
      <svg viewBox="0 0 13 13" className="absolute top-[318px] left-[1182px] size-[13px]" stroke="#ff0000" aria-hidden="true">
        <path d="M0 6.500H13M6.500 0V13" />
      </svg>

      <Palette title="Greek" at="top-[11px] left-[1227px] w-[150px]">
        <div className="grid grid-cols-6 pt-0.5 pr-1 pb-[3px] font-['Liberation_Serif',serif] text-[16px] leading-[23px]">
          {Array.from("αβγδεζηθικλμνξοπρστυϕχψωΑΒΓΔΕΖΗΘΙΚΛΜΝΞΟΠΡΣΤΥΦΧΨΩ").map((c, i) => (
            <button key={i} type="button" className={i < 24 ? "h-[23px] italic" : "h-[23px]"}>
              {c}
            </button>
          ))}
        </div>
      </Palette>
      <Palette title="Programming" at="top-[79px] left-[1389px] w-[142px]">
        <div className="grid grid-cols-2 pt-0.5 pr-2 pb-[3px] font-['Liberation_Sans',sans-serif] text-[13px] leading-[23px]">
          {["Add Line", "←", "if", "otherwise", "for", "while", "break", "continue", "return", "on error"].map((c) =>
            c === "←" ? (
              <button key={c} type="button" aria-label="Local definition" className="flex h-[23px] items-center justify-center">
                <svg viewBox="0 0 14 8" className="h-2 w-3.5" fill="none" stroke="#000" aria-hidden="true">
                  <path d="M1 4.500H14M4.500 1L1 4.500L4.500 8" />
                </svg>
              </button>
            ) : (
              <button key={c} type="button" className="h-[23px] whitespace-nowrap">
                {c}
              </button>
            ),
          )}
        </div>
      </Palette>
    </div>
  );
}

function Palette({ title, at, children }: Kids & { title: string; at: string }) {
  return (
    <section
      aria-label={title}
      className={
        "absolute border border-t-[#d4d0c8] border-l-[#d4d0c8] border-r-[#404040] border-b-[#404040] bg-[#d4d0c8] p-[3px] shadow-[inset_1px_1px_0_#ffffff,inset_-1px_-1px_0_#808080] " +
        at
      }
    >
      <header className="flex h-[15px] items-center justify-between bg-linear-to-r from-[#0a246a] to-[#a6caf0] pr-0.5 pl-0.5 font-['DejaVu_Sans_Condensed','DejaVu_Sans',sans-serif] text-[11px] font-bold text-white">
        {title}
        <button type="button" aria-label={"Close " + title} className={"flex size-[11px] items-center justify-center " + RAISED}>
          <svg viewBox="0 0 7 7" className="size-[7px]" stroke="#000">
            <path d="M1 1L6 6M6 1L1 6" />
          </svg>
        </button>
      </header>
      {children}
    </section>
  );
}

/* ---------- taskbar ---------- */

const FolderIcon = () => (
  <svg viewBox="0 0 32 32" className="size-8" aria-hidden="true">
    <path d="M2 3H11L13 5H30V26H2Z" fill="#e8c870" />
    <path d="M4 2H9V4H4Z" fill="#30a030" />
    <path d="M12 4H18V6H12Z" fill="#d03020" />
    <path d="M21 5H26V7H21Z" fill="#3080d0" />
    <path d="M1 8H31V28H1Z" fill="#f8e8a0" stroke="#d0b060" />
    <path d="M2 12H30" stroke="#fff8d0" strokeWidth="2" />
    <path d="M6 31V20Q6 18 8 18H26Q28 18 28 20V31H23V24H11V31Z" fill="#90c8e8" stroke="#4890c0" />
    <path d="M3 20L8 14L12 22Z" fill="#fff" opacity=".6" />
  </svg>
);
const ChromeIcon = () => (
  <svg viewBox="0 0 32 32" className="size-8" aria-hidden="true">
    <circle cx="16" cy="16" r="14" fill="#f8cc18" />
    <path d="M16 16L4 9A14 14 0 0 1 28.500 10H16Z" fill="#d83828" />
    <path d="M3.900 9A14 14 0 0 0 15 30L21 19L16 16L10.500 19Z" fill="#28a050" />
    <circle cx="16" cy="16" r="6.500" fill="#fff" />
    <circle cx="16" cy="16" r="5" fill="#3878c8" />
  </svg>
);
const IeIcon = () => (
  <svg viewBox="0 0 32 32" className="size-8" aria-hidden="true">
    <path d="M29 18H11Q11 24 17 24Q20 24 21.500 21.500H28.500Q25 30 16.500 30Q5 29 5 17.500Q6 6 17 5Q29 6 29 18ZM11.500 14H22Q21 10.500 17 10.500Q13 10.500 11.500 14Z" fill="#1878c0" stroke="#0c4f90" />
    <path d="M25 6Q31 1 30 7M26 5Q14 4 7 17Q1 27 3 30Q6 31 12 27" fill="none" stroke="#f0b830" strokeWidth="2.500" />
  </svg>
);
const CalcIcon = () => (
  <svg viewBox="0 0 32 32" className="size-8" aria-hidden="true">
    <rect x="5" y="1" width="22" height="30" rx="1" fill="#a8c8e0" stroke="#6898c0" />
    <path d="M7 3H25V6H7Z" fill="#f0a830" />
    <path d="M7 6H25V13H7Z" fill="#f8f8f0" />
    <text x="20" y="12" fontSize="7" fontFamily="Liberation Mono, monospace">
      0
    </text>
    <path d="M7 17.500H25M7 21.500H25M7 25.500H22M7 28.500H22" stroke="#fff" strokeWidth="2" strokeDasharray="3 1.500" />
    <path d="M22 24H25V30H22Z" fill="#f0a830" />
  </svg>
);
const PlayerIcon = () => (
  <svg viewBox="0 0 32 32" className="size-8" aria-hidden="true">
    <path d="M9 4H27V28H9Z" fill="#80b0d0" stroke="#5888b0" />
    <path d="M6 6H25V30H6Z" fill="#a8cce4" stroke="#6898c0" />
    <path d="M3 7H22V31H3Z" fill="#c0dcf0" stroke="#78a8c8" />
    <circle cx="13" cy="17" r="9.500" fill="#f07820" stroke="#fff" />
    <path d="M10 11L19 17L10 23Z" fill="#fff" />
  </svg>
);
const FarIcon = () => (
  <svg viewBox="0 0 32 32" className="size-8 shrink-0" shapeRendering="crispEdges" aria-hidden="true">
    <path d="M1 1H30V28H1Z" fill="#0000a8" stroke="#00d8f8" strokeWidth="2" />
    <path d="M3 3.500H8M19 3.500H26" stroke="#f8f800" />
    <path d="M3 6.500H11M3 9.500H10M3 12.500H11M3 15.500H10M17 6.500H27M17 9.500H26M3 25.500H12M18 25.500H27" stroke="#00c0f8" strokeDasharray="5 1" />
    <path d="M12.500 2V23M15.500 2V23M20.500 5V23M2 23.500H29" stroke="#00d8f8" />
    <path d="M1 29H30V32H1Z" />
    <path d="M2 30.500H29" stroke="#008080" strokeDasharray="3 1" />
  </svg>
);
const DrWebIcon = () => (
  <svg viewBox="0 0 32 32" className="size-8 shrink-0" aria-hidden="true">
    <path d="M15 0L29 5Q30 22 15 31Q0 22 1 5Z" fill="#58b818" stroke="#a8c890" />
    <path d="M15 2L27 6Q27 12 24 16L6 14L3 6Z" fill="#90e820" />
    <path d="M15 6L18 11L24 7L21 13L25 16L20 18L22 24L15 21L9 25L11 18L5 17L10 13L6 8L13 10Z" fill="#186808" />
    <path d="M11 13Q15 9 20 13L18 20H13Z" fill="#80d820" />
    <path d="M24 24L31 31" stroke="#7090b0" strokeWidth="3" />
    <circle cx="20" cy="20" r="6.500" fill="#c8f0e8" stroke="#88a8c8" strokeWidth="2" />
    <circle cx="19" cy="19" r="3" fill="#fff" opacity=".7" />
  </svg>
);
const WordIcon = () => (
  <svg viewBox="0 0 32 32" className="size-8 shrink-0" aria-hidden="true">
    <path d="M7 1H29V30H1V6Z" fill="#f4f8fc" stroke="#3870b0" strokeWidth="1.500" />
    <path d="M4 7L8 4H24V22H4Z" fill="#c8dcf4" />
    <path d="M12 23H26V28H7Z" fill="#d0dcec" />
    <path d="M22 18L31 20L29 28L20 26Z" fill="#fff" stroke="#90a8c8" />
    <path d="M8 25H20M10 27H18" stroke="#a8bcd8" />
    <text x="14" y="20" fontSize="21" fontWeight="700" textAnchor="middle" fill="#1858b0" fontFamily="Liberation Sans, sans-serif">
      W
    </text>
  </svg>
);

function TaskButton({ icon, text, active }: { icon: React.ReactNode; text: string; active?: boolean }) {
  return (
    <button
      type="button"
      className={
        active
          ? "flex h-[38px] w-[130px] items-center gap-1 border-2 border-t-[#404040] border-l-[#404040] border-r-white border-b-white bg-white pl-0.5 text-left font-bold"
          : "flex h-[38px] w-[130px] items-center gap-1 pl-[3px] text-left " + RAISED
      }
    >
      {icon}
      <span className="truncate">{text}</span>
    </button>
  );
}

const BarLine = () => <span className="h-9 w-[3px] border border-t-white border-l-white border-r-[#808080] border-b-[#808080]" />;

function Taskbar() {
  return (
    <footer className="flex h-[42px] items-center border-t border-white bg-[#d4d0c8] px-0.5">
      <button type="button" className={"flex h-[38px] w-[51px] items-center gap-0.5 pl-0.5 font-bold " + RAISED}>
        <svg viewBox="0 0 16 16" className="size-4 shrink-0" aria-hidden="true">
          <path d="M2 3Q5 1 7.500 3L6.500 7.500Q4 6 1 7.500Z" fill="#e85820" />
          <path d="M8.500 3.500Q11 5 15 3L14 7.500Q11 9 7.500 8Z" fill="#70b030" />
          <path d="M.8 8.500Q4 7 6.200 8.500L5 13Q3 11.500 0 13Z" fill="#3888d8" />
          <path d="M7.200 9Q10 10.500 13.600 8.500L12.500 13Q9 15 6 13.500Z" fill="#f0b820" />
        </svg>
        <span>Пуск</span>
      </button>
      <div className="ml-[7px] flex items-center">
        <BarLine />
      </div>
      <nav aria-label="Quick launch" className="ml-4 flex flex-none gap-[18px]">
        {[FolderIcon, ChromeIcon, IeIcon, CalcIcon, PlayerIcon].map((I, i) => (
          <button key={i} type="button" aria-label={["Explorer", "Chrome", "Internet Explorer", "Calculator", "Media Player"][i]}>
            <I />
          </button>
        ))}
      </nav>
      <div className="ml-[11px] flex min-w-0 flex-1 gap-px">
        <TaskButton icon={<FarIcon />} text="{I:\Игорь\URO..." />
        <TaskButton icon={<DrWebIcon />} text="0% - Dr.Web" />
        <TaskButton icon={<DrWebIcon />} text="51% - Dr.Web" />
        <TaskButton icon={<DrWebIcon />} text="51% - Dr.Web" />
        <TaskButton icon={<WordIcon />} text="ЦОС Практик..." />
        <TaskButton icon={<WordIcon />} text="Цифровая обр..." />
        <TaskButton icon={<WordIcon />} text="Формулы к за..." />
        <TaskButton active icon={<MLogo className="h-[30px] w-8 shrink-0" />} text="Mathcad - [Б..." />
      </div>
      <BarLine />
      <span className="mr-1.5 ml-2 font-['Liberation_Sans',sans-serif] text-xs">RU</span>
      <span className="mr-0.5 h-6 w-px bg-[#808080]" />
      <div className="flex h-[38px] w-[181px] items-center border border-t-[#808080] border-l-[#808080] border-r-white border-b-white pl-1.5">
        <svg viewBox="0 0 8 10" className="h-2.5 w-2" fill="none" stroke="#000" strokeWidth="1.500" aria-hidden="true">
          <path d="M1 4L4 1L7 4M1 9L4 6L7 9" />
        </svg>
        <svg viewBox="0 0 16 16" className="ml-2 size-4" aria-hidden="true">
          <path d="M1.500 1V15" stroke="#606060" strokeWidth="1.500" />
          <path d="M2.500 2Q6 0 8 2.500T14 3V9Q10 10 8 8T2.500 8Z" fill="#fff" stroke="#707070" />
          <circle cx="11" cy="11" r="4.500" fill="#d02020" />
          <path d="M9 9L13 13M13 9L9 13" stroke="#fff" strokeWidth="1.500" />
        </svg>
        <svg viewBox="0 0 16 16" className="ml-2 size-4" fill="none" stroke="#606060" aria-hidden="true">
          <path d="M4.500 3.500H15.500V12.500H4.500Z" fill="#d8dce0" stroke="#505050" />
          <path d="M7 14.500H13" strokeWidth="2" />
          <path d="M.5 .5H5.500V5.500H.5ZM2.500 5.500V11.500H5" fill="#e8e8e8" stroke="#404040" />
        </svg>
        <svg viewBox="0 0 16 16" className="ml-2 size-4" fill="none" stroke="#707070" aria-hidden="true">
          <path d="M1 5.500H3.500L7.500 2V14L3.500 10.500H1Z" fill="#fff" />
          <path d="M9.500 5Q11.500 8 9.500 11M11.500 3Q15 8 11.500 13" />
        </svg>
        <div className="flex-1 text-center leading-[18px]">
          <div>4:28</div>
          <div>14.08.2015</div>
        </div>
        <svg viewBox="0 0 16 14" className="mr-px h-3.5 w-4" aria-hidden="true">
          <path d="M1 1H15V11H1Z" fill="#2868c8" stroke="#183868" />
          <path d="M2 2H14L6 7L2 8Z" fill="#68a8f0" />
          <path d="M0 11H16V13H0Z" fill="#304050" />
          <path d="M2 10L6 12L2 14Z" fill="#f0d840" />
        </svg>
      </div>
    </footer>
  );
}

const Arrow = ({ d }: { d: string }) => (
  <svg viewBox="0 0 8 8" className="size-2" shapeRendering="crispEdges" aria-hidden="true">
    <path d={d} />
  </svg>
);

export default function App() {
  return (
    <div className="flex h-screen flex-col overflow-hidden bg-[#d4d0c8] font-['DejaVu_Sans_Condensed','DejaVu_Sans',sans-serif] text-[11px] leading-[14px] text-black">
      <header className="flex h-[18px] shrink-0 items-center bg-linear-to-r from-[#0a246a] to-[#a6caf0] pr-0.5 pl-[3px]">
        <MLogo className="h-3.5 w-4" />
        <h1 className="ml-0.5 flex-1 font-bold text-white">Mathcad - [БПФ.xmcd]</h1>
        <WinButtons />
      </header>
      <div className="flex h-5 shrink-0 items-center pr-0.5 pl-1">
        <svg viewBox="0 0 16 16" className="size-4" aria-hidden="true">
          <path d="M5 1H15L16 3V14H6Z" fill="#f0b020" stroke="#a06000" />
          <path d="M7 2H14V7L7 9Z" fill="#ffe060" />
          <path d="M0 6H4L6 10L8 6H11V15H8V11L6 14L3 11V15H1V8Z" fill="#38566c" />
        </svg>
        <nav aria-label="Menu" className="ml-[5px] flex flex-1 gap-[11px]">
          {["File", "Edit", "View", "Insert", "Format", "Tools", "Symbolics", "Window", "Help"].map((m) => (
            <button key={m} type="button">
              {m}
            </button>
          ))}
        </nav>
        <WinButtons />
      </div>

      <div role="toolbar" aria-label="Toolbars" className="shrink-0 border-t border-[#808080]">
        <Row>
          <Bar>
            <Grip />
            <Tools ids={["new"]} />
            <button type="button" aria-label="New from template" className="flex w-3 justify-center">
              <svg viewBox="0 0 5 3" className="h-[3px] w-[5px]">
                <path d="M0 0H5L2.500 3Z" />
              </svg>
            </button>
            <Tools ids={["open", "save"]} />
            <Sep />
            <Tools ids={["print", "preview", "spell"]} />
            <Sep />
            <Tools ids={["cut", "copy", "paste"]} />
            <Sep />
            <Tools ids={["undo", "redo"]} />
            <Sep />
            <Tools ids={["alignTop", "alignMid"]} />
            <Sep />
            <Tools ids={["fx", "cup", "eqBig"]} />
            <Sep />
            <Tools ids={["link", "puzzle", "table"]} />
            <Sep />
            <Combo label="Zoom" value="150%" w="w-[59px]" />
            <Sep />
            <Tools ids={["help"]} />
          </Bar>
          <Bar last>
            <Grip />
            <Tools ids={["req", "rlt", "rgt", "rle", "rge", "rne", "rnot", "rand", "ror", "plusC"]} />
          </Bar>
        </Row>
        <Row>
          <Bar>
            <Grip />
            <Tools ids={["mat", "xn", "xinv", "absx", "fM", "Mcol", "Mt", "mn", "dotp", "crossp", "sumv", "pic"]} />
          </Bar>
          <span className="ml-1 h-[27px] w-px bg-[#808080]" />
          <Bar last>
            <Grip />
            <Tools ids={["ddx", "dndx", "inf", "intab", "sumn", "prodn", "int", "sum", "prod", "lim", "lim+", "lim-", "nabla"]} />
          </Bar>
        </Row>
        <Row>
          <Bar>
            <Grip />
            <div className="flex gap-0.5">
              <Combo label="Style" value="Normal" w="w-32" />
              <Combo label="Font" value="Arial" w="w-[158px]" />
              <Combo label="Size" value="10" w="w-[43px]" />
            </div>
            <Sep />
            <div className="flex font-['Liberation_Serif',serif] text-[15px] font-bold">
              <button type="button" className="w-[23px]">B</button>
              <button type="button" className="w-[23px] italic">I</button>
              <button type="button" className="w-[23px] underline">U</button>
            </div>
            <Sep />
            <Tools ids={["left", "center", "right"]} on={["left"]} />
            <Sep />
            <Tools ids={["bullets", "numbers"]} />
            <Sep />
            <div className="flex font-['Liberation_Serif',serif] text-sm font-bold text-[#808080]">
              <button type="button" className="w-[23px]">
                x<sup className="text-[8px]">2</sup>
              </button>
              <button type="button" className="w-[23px]">
                x<sub className="text-[8px]">2</sub>
              </button>
            </div>
          </Bar>
          <Bar last>
            <Grip />
            <Tools
              ids={["calc", "graph", "matrix", "xeq", "calculus", "bool", "prog", "greek", "cap"]}
              on={["matrix", "calculus", "bool", "prog", "greek"]}
            />
          </Bar>
        </Row>
      </div>

      <main className="flex min-h-0 flex-1 flex-col border-t border-l-2 border-[#404040] pr-0.5">
        <div className="flex min-h-0 flex-1">
          <Worksheet />
          <div className={"flex w-4 shrink-0 flex-col " + DITHER}>
            <button type="button" aria-label="Scroll up" className={"flex h-4 items-center justify-center " + RAISED}>
              <Arrow d="M0 6H7L3.500 2Z" />
            </button>
            <span className={"mt-[62px] h-4 " + RAISED} />
            <span className="flex-1" />
            <button type="button" aria-label="Scroll down" className={"flex h-4 items-center justify-center " + RAISED}>
              <Arrow d="M0 2H7L3.500 6Z" />
            </button>
          </div>
        </div>
        <div className="flex h-4 shrink-0">
          <div className={"flex flex-1 " + DITHER}>
            <button type="button" aria-label="Scroll left" className={"flex w-4 items-center justify-center " + RAISED}>
              <Arrow d="M5 0V8L1 4Z" />
            </button>
            <span className={"w-4 " + RAISED} />
            <span className="flex-1" />
            <button type="button" aria-label="Scroll right" className={"flex w-4 items-center justify-center " + RAISED}>
              <Arrow d="M3 0V8L7 4Z" />
            </button>
          </div>
          <span className="w-4" />
        </div>
      </main>

      <div role="status" className="mt-0.5 flex h-5 shrink-0 items-center gap-0.5 border-t border-white pl-0.5">
        <span className="flex-1">Press F1 for help.</span>
        <span className="h-4 w-[34px] border border-t-[#808080] border-l-[#808080] border-r-white border-b-white pl-px">Auto</span>
        <span className="h-4 w-[26px] border border-t-[#808080] border-l-[#808080] border-r-white border-b-white" />
        <span className="h-4 w-7 border border-t-[#808080] border-l-[#808080] border-r-white border-b-white pl-px">NUM</span>
        <span className="h-4 w-[50px] border border-t-[#808080] border-l-[#808080] border-r-white border-b-white pl-px">Page 1</span>
      </div>
      <Taskbar />
    </div>
  );
}
